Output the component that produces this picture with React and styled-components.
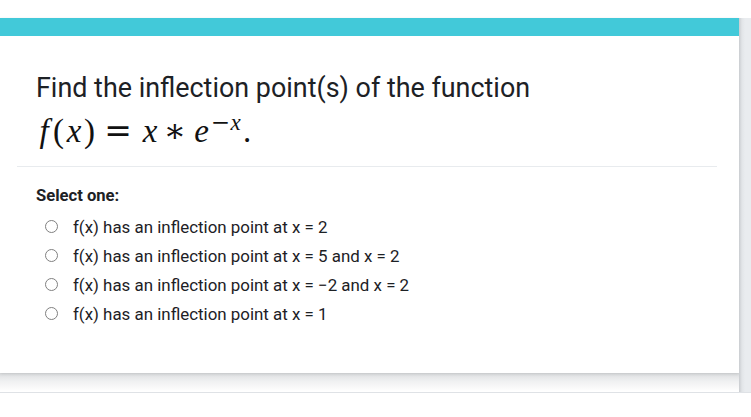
import React from "react";
import styled, { createGlobalStyle } from "styled-components";

const Global = createGlobalStyle`
  html, body { margin: 0; padding: 0; background: #ffffff; }
  body { font-family: Roboto, "Liberation Sans", sans-serif; color: #1d2125; }
`;

const Page = styled.div`
  width: 751px;
  height: 417px;
  padding-top: 18px;
  box-sizing: border-box;
  overflow: hidden;
`;

const Frame = styled.div`
  display: flex;
  height: 374px;
  border-bottom: 1px solid #dfe2e6;
`;

const Main = styled.div`
  flex: 1;
  padding-bottom: 18px;
  background: linear-gradient(#dcdee0 0, #eff0f1 8px, #fbfbfb 16px, #ffffff 18px);
  background-position: 0 355px;
  background-repeat: no-repeat;
  background-size: 100% 19px;
`;

const Scrollbar = styled.div`
  width: 12px;
  background: linear-gradient(90deg, #c9ccd0 0, #e2e5e8 3px, #e9ecef 6px);
`;

const Card = styled.div`
  height: 355px;
  box-sizing: border-box;
  background: #ffffff;
  border-top: 18px solid #42c9d9;
  box-shadow: 0 1px 3px rgba(0, 0, 0, 0.12);
  padding: 0 22px 0 17px;
`;

const Question = styled.div`
  padding: 36px 0 0 19px;
  height: 131px;
  box-sizing: border-box;
  border-bottom: 1px solid #e8ebee;
`;

const Title = styled.div`
  font-size: 26.9px;
  line-height: 32px;
  color: #1d2125;
  white-space: nowrap;
`;

const MathLine = styled.div`
  font-family: "Liberation Serif", "DejaVu Serif", serif;
  font-size: 33px;
  line-height: 36px;
  height: 36px;
  color: #111111;
  white-space: nowrap;
`;

const G = styled.span`
  display: inline-flex;
  justify-content: center;
  width: ${(p) => p.$w}px;
  margin-left: ${(p) => p.$ml || 0}px;
  font-style: ${(p) => (p.$i ? "italic" : "normal")};
  font-family: ${(p) =>
    p.$sym ? '"DejaVu Serif", "Liberation Serif", serif' : "inherit"};
  line-height: 36px;
`;

const Sup = styled.span`
  display: inline-block;
  font-size: 23px;
  vertical-align: 12px;
  line-height: 20px;
`;

const Answers = styled.div`
  padding: 19px 0 0 19px;
`;

const Prompt = styled.div`
  font-size: 16.6px;
  font-weight: 700;
  line-height: 20px;
  color: #1d2125;
  margin-bottom: 6px;
`;

const Option = styled.label`
  display: flex;
  align-items: center;
  height: 29px;
  padding-left: 9px;
  font-size: 16.9px;
  color: #1d2125;
  white-space: nowrap;
`;

const Radio = styled.span`
  width: 13px;
  height: 13px;
  border: 1px solid #808080;
  border-radius: 50%;
  margin-right: 15px;
  box-sizing: border-box;
  flex: none;
`;

const options = [
  "f(x) has an inflection point at x = 2",
  "f(x) has an inflection point at x = 5 and x = 2",
  "f(x) has an inflection point at x = \u22122 and x = 2",
  "f(x) has an inflection point at x = 1",
];

export default function App() {
  return (
    <>
      <Global />
      <Page>
        <Frame>
          <Main>
            <Card>
              <Question>
                <Title>Find the inflection point(s) of the function</Title>
                <MathLine>
                  <G $w={16} $i>f</G>
                  <G $w={13}>(</G>
                  <G $w={18} $i>x</G>
                  <G $w={13}>)</G>
                  <G $w={26} $ml={9} $sym>=</G>
                  <G $w={18} $ml={10} $i>x</G>
                  <G $w={18} $ml={7} $sym>∗</G>
                  <G $w={17} $ml={9} $i>e</G>
                  <Sup>
                    <G $w={17} $ml={2} $sym>−</G>
                    <G $w={13} $i>x</G>
                  </Sup>
                  <G $w={8} $ml={1}>.</G>
                </MathLine>
              </Question>
              <Answers>
                <Prompt>Select one:</Prompt>
                {options.map((o) => (
                  <Option key={o}>
                    <Radio />
                    {o}
                  </Option>
                ))}
              </Answers>
            </Card>
          </Main>
          <Scrollbar />
        </Frame>
      </Page>
    </>
  );
}
